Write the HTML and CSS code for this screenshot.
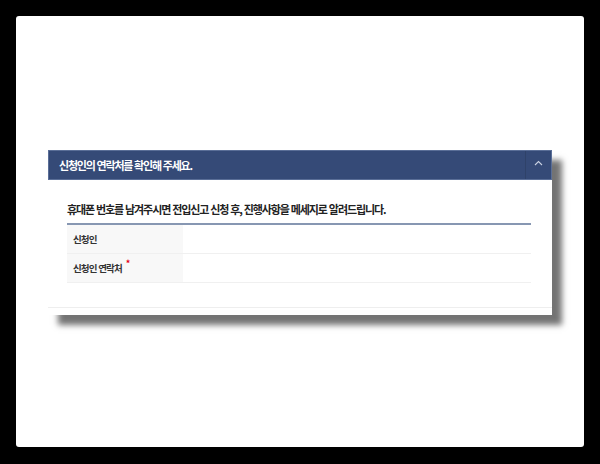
FILE: index.html
```html
<!DOCTYPE html>
<html lang="ko">
<head>
<meta charset="utf-8">
<link rel="stylesheet" href="styles.css">
</head>
<body>
<div class="frame">
  <section class="card">
    <header class="card-head">
      <h2 class="card-title">신청인의 연락처를 확인해 주세요.</h2>
      <button class="toggle" type="button" aria-label="접기">
        <svg width="9" height="6" viewBox="0 0 9 6"><path d="M1 5 L4.5 1.5 L8 5" fill="none" stroke="#c9d1e2" stroke-width="1.1"/></svg>
      </button>
    </header>
    <div class="card-body">
      <p class="notice">휴대폰 번호를 남겨주시면 전입신고 신청 후, 진행사항을 메세지로 알려드립니다.</p>
      <table class="info">
        <tr><th>신청인</th><td></td></tr>
        <tr><th>신청인 연락처<span class="req">*</span></th><td></td></tr>
      </table>
    </div>
    <div class="card-foot"></div>
  </section>
</div>
</body>
</html>
```

FILE: styles.css
```css
html, body {
  margin: 0;
  padding: 0;
  background: #000;
  width: 600px;
  height: 464px;
  overflow: hidden;
}
body {
  font-family: "Noto Sans CJK KR", "Noto Sans", sans-serif;
}
.frame {
  margin: 16px;
  width: 568px;
  height: 431px;
  box-sizing: border-box;
  background: #fff;
  border-radius: 3px;
  padding: 134px 0 0 32px;
}
.card {
  width: 504px;
  background: #fff;
  box-shadow: 10px 10px 6px rgba(0, 0, 0, 0.55);
}
.card-head {
  display: flex;
  align-items: stretch;
  background: #354a77;
  border: 1px solid #5a6e97;
  box-sizing: border-box;
  height: 30px;
}
.card-title {
  flex: 1;
  margin: 0;
  padding-left: 10px;
  display: flex;
  align-items: center;
  color: #fff;
  font-size: 11px;
  font-weight: 700;
  letter-spacing: -1.2px;
}
.toggle {
  width: 26px;
  padding: 0 0 4px 0;
  border: 0;
  border-left: 1px solid #2f4269;
  background: #354a77;
  display: flex;
  align-items: center;
  justify-content: center;
}
.card-body {
  padding: 22px 21px 24px 19px;
}
.notice {
  margin: 0 0 7px 0;
  font-size: 11px;
  line-height: 14px;
  font-weight: 700;
  color: #222;
  letter-spacing: -1.1px;
}
.info {
  width: 100%;
  border-collapse: collapse;
  border-top: 2px solid #8797b2;
}
.info th {
  width: 116px;
  height: 29px;
  box-sizing: border-box;
  padding: 0 0 0 6px;
  background: #f8f8f8;
  text-align: left;
  font-size: 9.5px;
  font-weight: 700;
  color: #333;
  letter-spacing: -0.9px;
  border-bottom: 1px solid #f0f0f0;
}
.info td {
  border-bottom: 1px solid #f0f0f0;
}
.req {
  color: #e60012;
  font-size: 9px;
  position: relative;
  top: -5px;
  margin-left: 4px;
}
.card-foot {
  height: 7px;
  border-top: 1px solid #eeeeee;
}
```
